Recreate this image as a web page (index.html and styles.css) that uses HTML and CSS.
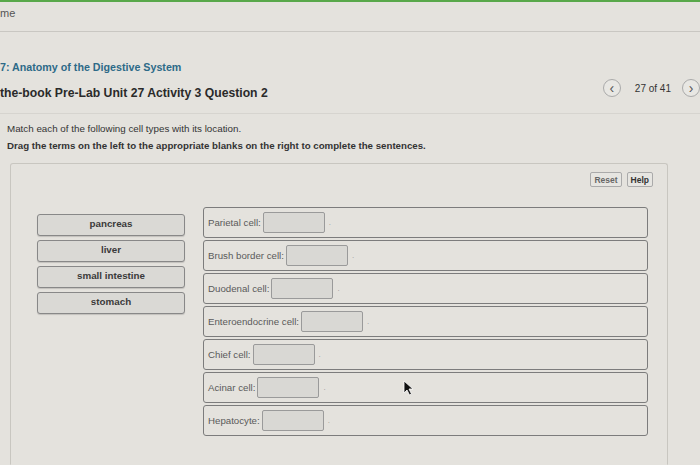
FILE: index.html
```html
<!DOCTYPE html>
<html lang="en">
<head>
  <meta charset="UTF-8" />
  <title>Pre-Lab Unit 27 Activity 3 Question 2</title>
  <link rel="stylesheet" href="styles.css">
</head>
<body>
  <div class="topline"></div>
  <div class="crumb">me</div>

  <div class="head">
    <div class="titles">
      <div class="chapter">7: Anatomy of the Digestive System</div>
      <div class="question">the-book Pre-Lab Unit 27 Activity 3 Question 2</div>
    </div>
    <div class="pager">
      <span class="circle">&lsaquo;</span>
      <span class="count">27 of 41</span>
      <span class="circle">&rsaquo;</span>
    </div>
  </div>

  <div class="intro">
    <p class="lead">Match each of the following cell types with its location.</p>
    <p class="task">Drag the terms on the left to the appropriate blanks on the right to complete the sentences.</p>
  </div>

  <div class="panel">
    <div class="tools">
      <button class="tool reset">Reset</button>
      <button class="tool">Help</button>
    </div>

    <div class="board">
      <div class="terms">
        <div class="term">pancreas</div>
        <div class="term">liver</div>
        <div class="term">small intestine</div>
        <div class="term">stomach</div>
      </div>

      <div class="sentences">
        <div class="sentence"><span class="label">Parietal cell:</span><span class="blank"></span><span class="dot">.</span></div>
        <div class="sentence"><span class="label">Brush border cell:</span><span class="blank"></span><span class="dot">.</span></div>
        <div class="sentence"><span class="label">Duodenal cell:</span><span class="blank"></span><span class="dot">.</span></div>
        <div class="sentence"><span class="label">Enteroendocrine cell:</span><span class="blank"></span><span class="dot">.</span></div>
        <div class="sentence"><span class="label">Chief cell:</span><span class="blank"></span><span class="dot">.</span></div>
        <div class="sentence"><span class="label">Acinar cell:</span><span class="blank"></span><span class="dot">.</span></div>
        <div class="sentence"><span class="label">Hepatocyte:</span><span class="blank"></span><span class="dot">.</span></div>
      </div>
    </div>
  </div>

  <svg class="cursor" width="12" height="16" viewBox="0 0 12 16">
    <path d="M1 1 L1 13 L4 10 L6.5 15 L8.5 14 L6 9 L10 9 Z" fill="#111" stroke="#fff" stroke-width="0.8"/>
  </svg>
</body>
</html>
```

FILE: styles.css
```css
body {
  margin: 0;
  background: #e4e2dd;
  font-family: "Liberation Sans", Arial, sans-serif;
  color: #333;
  overflow: hidden;
  height: 465px;
  position: relative;
}

.topline {
  height: 2px;
  background: #58a84a;
}

.crumb {
  height: 29px;
  line-height: 22px;
  font-size: 11px;
  color: #555;
  border-bottom: 1px solid #c9c7c2;
}

.head {
  display: flex;
  justify-content: space-between;
  align-items: flex-end;
  padding: 29px 0 13px;
  border-bottom: 1px solid #d6d4cf;
}

.chapter {
  font-size: 10.7px;
  line-height: 12px;
  font-weight: bold;
  color: #2d6a88;
}

.question {
  margin-top: 13px;
  font-size: 12.2px;
  line-height: 14px;
  font-weight: bold;
  color: #2a2a2a;
}

.pager {
  display: flex;
  align-items: center;
  margin-bottom: 3px;
}

.circle {
  width: 16px;
  height: 16px;
  border: 1px solid #aaa;
  border-radius: 50%;
  display: flex;
  align-items: center;
  justify-content: center;
  font-size: 14px;
  color: #555;
  background: #e8e7e3;
}

.count {
  font-size: 10px;
  color: #333;
  margin: 0 11px 0 14px;
}

.intro {
  padding: 9px 0 0 7px;
}

.intro p {
  margin: 0;
  font-size: 9.8px;
  line-height: 11px;
  color: #333;
}

.intro .task {
  margin-top: 6px;
  font-weight: bold;
  font-size: 9.7px;
}

.panel {
  margin: 12px 32px 0 10px;
  height: 292px;
  border: 1px solid #c8c6c0;
  border-bottom-color: transparent;
  border-radius: 3px 3px 0 0;
  padding: 8px 14px 0 26px;
}

.tools {
  display: flex;
  justify-content: flex-end;
  gap: 5px;
}

.tool {
  font-family: "Liberation Sans", Arial, sans-serif;
  font-size: 8.5px;
  font-weight: bold;
  padding: 0 3px;
  height: 15px;
  background: #e6e5e1;
  border: 1px solid #aaa;
  border-radius: 2px;
  color: #333;
}

.tool.reset {
  color: #666;
}

.board {
  display: flex;
  gap: 18px;
  margin-top: 20px;
}

.terms {
  width: 148px;
  margin-top: 7px;
  display: flex;
  flex-direction: column;
  gap: 4px;
}

.term {
  height: 22px;
  box-sizing: border-box;
  border: 1px solid #888;
  border-radius: 3px;
  background: #dad9d5;
  box-shadow: 0 1px 1px rgba(0, 0, 0, 0.15);
  font-size: 9.8px;
  font-weight: bold;
  color: #3a3a3a;
  text-align: center;
  line-height: 18px;
}

.sentences {
  width: 445px;
  display: flex;
  flex-direction: column;
  gap: 2px;
}

.sentence {
  height: 31px;
  box-sizing: border-box;
  border: 1.5px solid #7c7c7c;
  border-radius: 3px;
  display: flex;
  align-items: center;
  padding-left: 4px;
}

.label {
  font-size: 9.7px;
  color: #5a5a5a;
}

.blank {
  width: 62px;
  height: 21px;
  box-sizing: border-box;
  margin-left: 2px;
  background: #d9d8d4;
  border: 1px solid #9a9a9a;
  border-radius: 2px;
}

.dot {
  font-size: 8px;
  color: #999;
  margin-left: 4px;
}

.cursor {
  position: absolute;
  left: 403px;
  top: 380px;
}
```
